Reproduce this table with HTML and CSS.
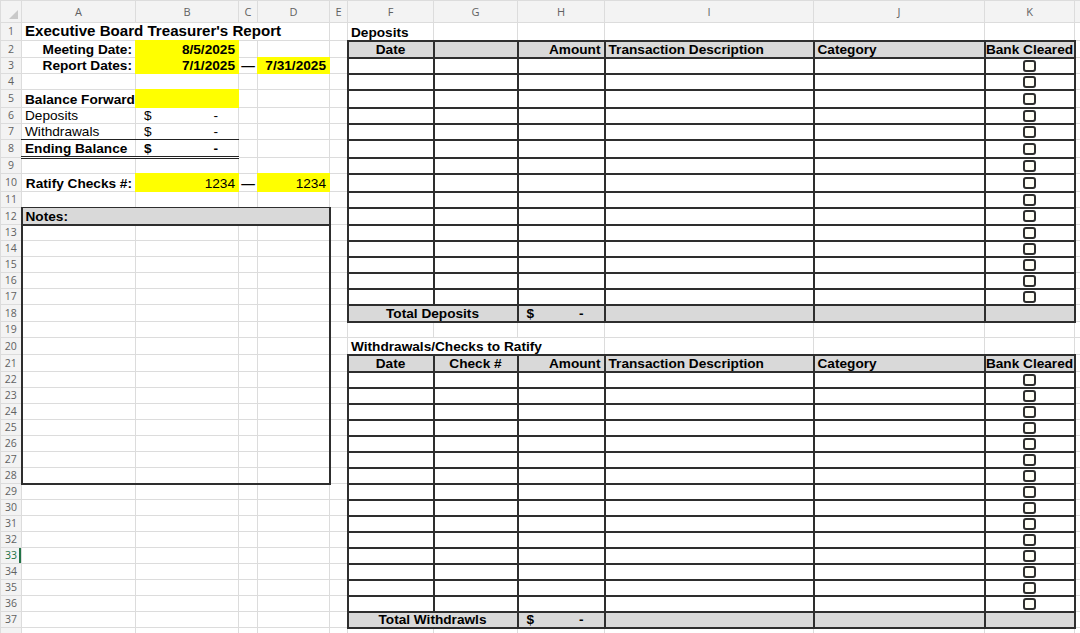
FILE: index.html
```html
<!DOCTYPE html>
<html lang="en">
<head>
<meta charset="utf-8">
<title>Executive Board Treasurer's Report</title>
<link rel="stylesheet" href="styles.css">
</head>
<body>
<table class="sheet">
<colgroup>
<col class="c-rh"><col class="c-a"><col class="c-b"><col class="c-c"><col class="c-d"><col class="c-e"><col class="c-f"><col class="c-g"><col class="c-h"><col class="c-i"><col class="c-j"><col class="c-k"><col class="c-l">
</colgroup>
<tbody>
<tr class="h22"><td class="corner"></td><td class="ch">A</td><td class="ch">B</td><td class="ch">C</td><td class="ch">D</td><td class="ch">E</td><td class="ch">F</td><td class="ch">G</td><td class="ch">H</td><td class="ch">I</td><td class="ch">J</td><td class="ch">K</td><td class="ch"></td></tr>
<tr class="h18"><td class="rh">1</td><td colspan="4" class="title">Executive Board Treasurer's Report</td><td></td><td class="bold">Deposits</td><td></td><td></td><td></td><td></td><td></td><td></td></tr>
<tr class="h17"><td class="rh">2</td><td class="bold r">Meeting Date:</td><td class="y bold r">8/5/2025</td><td></td><td></td><td></td><td class="b g bold c">Date</td><td class="b g"></td><td class="b g bold r">Amount</td><td class="b g bold">Transaction Description</td><td class="b g bold">Category</td><td class="b g bold c kh">Bank Cleared</td><td></td></tr>
<tr><td class="rh">3</td><td class="bold r">Report Dates:</td><td class="y bold r">7/1/2025</td><td class="c dash">—</td><td class="y bold r">7/31/2025</td><td></td><td class="b"></td><td class="b"></td><td class="b"></td><td class="b"></td><td class="b"></td><td class="b k"><span class="cb"></span></td><td></td></tr>
<tr><td class="rh">4</td><td></td><td></td><td></td><td></td><td></td><td class="b"></td><td class="b"></td><td class="b"></td><td class="b"></td><td class="b"></td><td class="b k"><span class="cb"></span></td><td></td></tr>
<tr class="h18"><td class="rh">5</td><td class="bold">Balance Forward</td><td class="y"></td><td></td><td></td><td></td><td class="b"></td><td class="b"></td><td class="b"></td><td class="b"></td><td class="b"></td><td class="b k"><span class="cb"></span></td><td></td></tr>
<tr><td class="rh">6</td><td>Deposits</td><td class="acc"><span class="cur">$</span>-</td><td></td><td></td><td></td><td class="b"></td><td class="b"></td><td class="b"></td><td class="b"></td><td class="b"></td><td class="b k"><span class="cb"></span></td><td></td></tr>
<tr><td class="rh">7</td><td class="ul">Withdrawals</td><td class="acc ul"><span class="cur">$</span>-</td><td></td><td></td><td></td><td class="b"></td><td class="b"></td><td class="b"></td><td class="b"></td><td class="b"></td><td class="b k"><span class="cb"></span></td><td></td></tr>
<tr class="h18"><td class="rh">8</td><td class="bold dbl">Ending Balance</td><td class="acc bold dbl"><span class="cur">$</span>-</td><td></td><td></td><td></td><td class="b"></td><td class="b"></td><td class="b"></td><td class="b"></td><td class="b"></td><td class="b k"><span class="cb"></span></td><td></td></tr>
<tr><td class="rh">9</td><td></td><td></td><td></td><td></td><td></td><td class="b"></td><td class="b"></td><td class="b"></td><td class="b"></td><td class="b"></td><td class="b k"><span class="cb"></span></td><td></td></tr>
<tr class="h18"><td class="rh">10</td><td class="bold r">Ratify Checks #:</td><td class="y r">1234</td><td class="c dash">—</td><td class="y r">1234</td><td></td><td class="b"></td><td class="b"></td><td class="b"></td><td class="b"></td><td class="b"></td><td class="b k"><span class="cb"></span></td><td></td></tr>
<tr><td class="rh">11</td><td></td><td></td><td></td><td></td><td></td><td class="b"></td><td class="b"></td><td class="b"></td><td class="b"></td><td class="b"></td><td class="b k"><span class="cb"></span></td><td></td></tr>
<tr class="h17"><td class="rh">12</td><td colspan="4" class="b g bold notes">Notes:</td><td></td><td class="b"></td><td class="b"></td><td class="b"></td><td class="b"></td><td class="b"></td><td class="b k"><span class="cb"></span></td><td></td></tr>
<tr><td class="rh">13</td><td class="nl"></td><td></td><td></td><td class="nr"></td><td></td><td class="b"></td><td class="b"></td><td class="b"></td><td class="b"></td><td class="b"></td><td class="b k"><span class="cb"></span></td><td></td></tr>
<tr><td class="rh">14</td><td class="nl"></td><td></td><td></td><td class="nr"></td><td></td><td class="b"></td><td class="b"></td><td class="b"></td><td class="b"></td><td class="b"></td><td class="b k"><span class="cb"></span></td><td></td></tr>
<tr><td class="rh">15</td><td class="nl"></td><td></td><td></td><td class="nr"></td><td></td><td class="b"></td><td class="b"></td><td class="b"></td><td class="b"></td><td class="b"></td><td class="b k"><span class="cb"></span></td><td></td></tr>
<tr><td class="rh">16</td><td class="nl"></td><td></td><td></td><td class="nr"></td><td></td><td class="b"></td><td class="b"></td><td class="b"></td><td class="b"></td><td class="b"></td><td class="b k"><span class="cb"></span></td><td></td></tr>
<tr><td class="rh">17</td><td class="nl"></td><td></td><td></td><td class="nr"></td><td></td><td class="b"></td><td class="b"></td><td class="b"></td><td class="b"></td><td class="b"></td><td class="b k"><span class="cb"></span></td><td></td></tr>
<tr class="h17"><td class="rh">18</td><td class="nl"></td><td></td><td></td><td class="nr"></td><td></td><td colspan="2" class="b g bold c">Total Deposits</td><td class="b g bold acc"><span class="cur">$</span>-</td><td class="b g"></td><td class="b g"></td><td class="b g"></td><td></td></tr>
<tr><td class="rh">19</td><td class="nl"></td><td></td><td></td><td class="nr"></td><td></td><td></td><td></td><td></td><td></td><td></td><td></td><td></td></tr>
<tr class="h17"><td class="rh">20</td><td class="nl"></td><td></td><td></td><td class="nr"></td><td></td><td colspan="3" class="bold">Withdrawals/Checks to Ratify</td><td></td><td></td><td></td><td></td></tr>
<tr class="h17"><td class="rh">21</td><td class="nl"></td><td></td><td></td><td class="nr"></td><td></td><td class="b g bold c">Date</td><td class="b g bold c">Check #</td><td class="b g bold r">Amount</td><td class="b g bold">Transaction Description</td><td class="b g bold">Category</td><td class="b g bold c kh">Bank Cleared</td><td></td></tr>
<tr><td class="rh">22</td><td class="nl"></td><td></td><td></td><td class="nr"></td><td></td><td class="b"></td><td class="b"></td><td class="b"></td><td class="b"></td><td class="b"></td><td class="b k"><span class="cb"></span></td><td></td></tr>
<tr><td class="rh">23</td><td class="nl"></td><td></td><td></td><td class="nr"></td><td></td><td class="b"></td><td class="b"></td><td class="b"></td><td class="b"></td><td class="b"></td><td class="b k"><span class="cb"></span></td><td></td></tr>
<tr><td class="rh">24</td><td class="nl"></td><td></td><td></td><td class="nr"></td><td></td><td class="b"></td><td class="b"></td><td class="b"></td><td class="b"></td><td class="b"></td><td class="b k"><span class="cb"></span></td><td></td></tr>
<tr><td class="rh">25</td><td class="nl"></td><td></td><td></td><td class="nr"></td><td></td><td class="b"></td><td class="b"></td><td class="b"></td><td class="b"></td><td class="b"></td><td class="b k"><span class="cb"></span></td><td></td></tr>
<tr><td class="rh">26</td><td class="nl"></td><td></td><td></td><td class="nr"></td><td></td><td class="b"></td><td class="b"></td><td class="b"></td><td class="b"></td><td class="b"></td><td class="b k"><span class="cb"></span></td><td></td></tr>
<tr><td class="rh">27</td><td class="nl"></td><td></td><td></td><td class="nr"></td><td></td><td class="b"></td><td class="b"></td><td class="b"></td><td class="b"></td><td class="b"></td><td class="b k"><span class="cb"></span></td><td></td></tr>
<tr><td class="rh">28</td><td class="nl nb"></td><td class="nb"></td><td class="nb"></td><td class="nr nb"></td><td></td><td class="b"></td><td class="b"></td><td class="b"></td><td class="b"></td><td class="b"></td><td class="b k"><span class="cb"></span></td><td></td></tr>
<tr><td class="rh">29</td><td></td><td></td><td></td><td></td><td></td><td class="b"></td><td class="b"></td><td class="b"></td><td class="b"></td><td class="b"></td><td class="b k"><span class="cb"></span></td><td></td></tr>
<tr><td class="rh">30</td><td></td><td></td><td></td><td></td><td></td><td class="b"></td><td class="b"></td><td class="b"></td><td class="b"></td><td class="b"></td><td class="b k"><span class="cb"></span></td><td></td></tr>
<tr><td class="rh">31</td><td></td><td></td><td></td><td></td><td></td><td class="b"></td><td class="b"></td><td class="b"></td><td class="b"></td><td class="b"></td><td class="b k"><span class="cb"></span></td><td></td></tr>
<tr><td class="rh">32</td><td></td><td></td><td></td><td></td><td></td><td class="b"></td><td class="b"></td><td class="b"></td><td class="b"></td><td class="b"></td><td class="b k"><span class="cb"></span></td><td></td></tr>
<tr><td class="rh sel">33</td><td></td><td></td><td></td><td></td><td></td><td class="b"></td><td class="b"></td><td class="b"></td><td class="b"></td><td class="b"></td><td class="b k"><span class="cb"></span></td><td></td></tr>
<tr><td class="rh">34</td><td></td><td></td><td></td><td></td><td></td><td class="b"></td><td class="b"></td><td class="b"></td><td class="b"></td><td class="b"></td><td class="b k"><span class="cb"></span></td><td></td></tr>
<tr><td class="rh">35</td><td></td><td></td><td></td><td></td><td></td><td class="b"></td><td class="b"></td><td class="b"></td><td class="b"></td><td class="b"></td><td class="b k"><span class="cb"></span></td><td></td></tr>
<tr><td class="rh">36</td><td></td><td></td><td></td><td></td><td></td><td class="b"></td><td class="b"></td><td class="b"></td><td class="b"></td><td class="b"></td><td class="b k"><span class="cb"></span></td><td></td></tr>
<tr><td class="rh">37</td><td></td><td></td><td></td><td></td><td></td><td colspan="2" class="b g bold c">Total Withdrawls</td><td class="b g bold acc"><span class="cur">$</span>-</td><td class="b g"></td><td class="b g"></td><td class="b g"></td><td></td></tr>
<tr><td class="rh"></td><td></td><td></td><td></td><td></td><td></td><td></td><td></td><td></td><td></td><td></td><td></td><td></td></tr>
</tbody>
</table>
</body>
</html>
```

FILE: styles.css
```css
* { box-sizing: border-box; }
html, body { margin: 0; padding: 0; background: #ffffff; }
body { width: 1080px; height: 633px; overflow: hidden; }

.sheet {
  border-collapse: collapse;
  table-layout: fixed;
  width: 1134px;
  font-family: "Liberation Sans", Arial, sans-serif;
  font-size: 13.65px;
  color: #000;
}
.c-rh { width: 21px; }
.c-a { width: 114px; }
.c-b { width: 103px; }
.c-c { width: 19px; }
.c-d { width: 72px; }
.c-e { width: 18px; }
.c-f { width: 86px; }
.c-g { width: 84px; }
.c-h { width: 87px; }
.c-i { width: 209px; }
.c-j { width: 171px; }
.c-k { width: 90px; }
.c-l { width: 60px; }

.sheet tr { height: 16px; }
.sheet tr.h17 { height: 17px; }
.sheet tr.h18 { height: 18px; }
.sheet tr.h22 { height: 22px; }

.sheet td {
  border: 1px solid #dcdcdc;
  padding: 0 3px 1px 3px;
  line-height: 13px;
  vertical-align: bottom;
  white-space: nowrap;
  overflow: visible;
}

.corner, .ch, .rh {
  background: #f3f3f3;
  border-color: #d2d2d2;
  color: #616161;
  font-family: "Open Sans", "Noto Sans", sans-serif;
  font-weight: 400;
  text-align: center;
  vertical-align: middle;
}
.sheet td.ch { font-size: 11px; vertical-align: middle; padding: 0; }
.sheet td.rh { font-size: 10.5px; vertical-align: middle; padding: 0; }
.sheet td.corner { position: relative; padding: 0; }
.corner::after {
  content: "";
  position: absolute;
  right: 3px;
  bottom: 3px;
  border-left: 9px solid transparent;
  border-bottom: 9px solid #c9c9c9;
}
.sheet td.sel { color: #1e7145; box-shadow: inset -2px 0 0 #217346; }

.title { font-size: 15.1px; font-weight: 700; }
.sheet td.title { padding: 0 3px 2px 3px; line-height: 15px; }
.bold { font-weight: 700; }
.r { text-align: right; }
.c { text-align: center; }
.dash { font-weight: 700; }
.sheet td.dash { padding: 0 0 1px 0; }

.sheet td.y { background: #ffff00; border: 1px double #ffff00; }
.sheet td.g { background: #d9d9d9; }
.sheet td.b { border: 2px solid #2e2e2e; }
.sheet td.kh { padding: 0 0 1px 0; }

.sheet td.k { text-align: center; vertical-align: middle; line-height: 0; padding: 0; }
.cb {
  display: block;
  margin: 0 auto;
  width: 13px;
  height: 12px;
  border: 2px solid #2e2e2e;
  border-radius: 3px;
  background: #fffef6;
}

.sheet td.acc { text-align: right; padding: 0 20px 1px 8px; }
.cur { float: left; }

.sheet td.ul { border-bottom: 1px double #222222; }
.sheet td.dbl { border-bottom: 3px double #222222; }

.sheet td.notes { border-top: 1px double #2e2e2e; }
.sheet td.nl { border-left: 2px solid #2e2e2e; }
.sheet td.nr { border-right: 2px solid #2e2e2e; }
.sheet td.nb { border-bottom: 2px solid #2e2e2e; }
```
